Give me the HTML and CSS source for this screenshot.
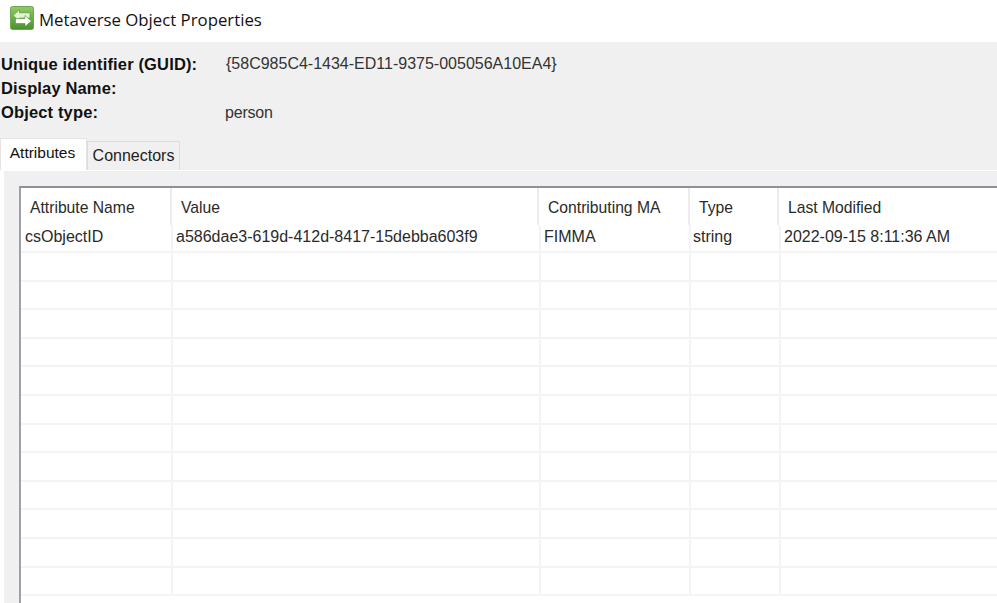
FILE: index.html
```html
<!DOCTYPE html>
<html lang="en">
<head>
<meta charset="utf-8">
<title>Metaverse Object Properties</title>
<link rel="stylesheet" href="styles.css">
</head>
<body>
<div class="window">
  <header class="titlebar">
    <svg class="app-icon" viewBox="0 0 24 24" width="24" height="24" aria-hidden="true">
      <defs>
        <linearGradient id="g" x1="0" y1="0" x2="0" y2="1">
          <stop offset="0" stop-color="#93c96a"/>
          <stop offset="1" stop-color="#47922a"/>
        </linearGradient>
      </defs>
      <rect x="0.5" y="0.5" width="23" height="23" rx="2" fill="url(#g)" stroke="#6ea64c"/>
      <path d="M3 9.5 L9.5 3.8 V6.8 H20 V12 H9.5 V15 Z" fill="#e2f3d2" stroke="#4f8f33" stroke-width="0.6"/>
      <path d="M21.5 15 L15 9.5 V12.5 H5.5 V17.5 H15 V20.5 Z" fill="#ffffff" stroke="#4f8f33" stroke-width="0.6"/>
    </svg>
    <h1 class="title">Metaverse Object Properties</h1>
  </header>
  <section class="summary">
    <div class="field"><span class="label">Unique identifier (GUID):</span><span class="val">{58C985C4-1434-ED11-9375-005056A10EA4}</span></div>
    <div class="field"><span class="label">Display Name:</span></div>
    <div class="field"><span class="label">Object type:</span><span class="val">person</span></div>
  </section>
  <nav class="tabs">
    <div class="tab active">Attributes</div>
    <div class="tab">Connectors</div>
  </nav>
  <section class="panel">
    <div class="list">
      <div class="row head">
        <div class="cell c1">Attribute Name</div>
        <div class="cell c2">Value</div>
        <div class="cell c3">Contributing MA</div>
        <div class="cell c4">Type</div>
        <div class="cell c5">Last Modified</div>
      </div>
      <div class="row first">
        <div class="cell c1">csObjectID</div>
        <div class="cell c2">a586dae3-619d-412d-8417-15debba603f9</div>
        <div class="cell c3">FIMMA</div>
        <div class="cell c4">string</div>
        <div class="cell c5">2022-09-15 8:11:36 AM</div>
      </div>
      <div class="row"><div class="cell c1"></div><div class="cell c2"></div><div class="cell c3"></div><div class="cell c4"></div><div class="cell c5"></div></div>
      <div class="row"><div class="cell c1"></div><div class="cell c2"></div><div class="cell c3"></div><div class="cell c4"></div><div class="cell c5"></div></div>
      <div class="row"><div class="cell c1"></div><div class="cell c2"></div><div class="cell c3"></div><div class="cell c4"></div><div class="cell c5"></div></div>
      <div class="row"><div class="cell c1"></div><div class="cell c2"></div><div class="cell c3"></div><div class="cell c4"></div><div class="cell c5"></div></div>
      <div class="row"><div class="cell c1"></div><div class="cell c2"></div><div class="cell c3"></div><div class="cell c4"></div><div class="cell c5"></div></div>
      <div class="row"><div class="cell c1"></div><div class="cell c2"></div><div class="cell c3"></div><div class="cell c4"></div><div class="cell c5"></div></div>
      <div class="row"><div class="cell c1"></div><div class="cell c2"></div><div class="cell c3"></div><div class="cell c4"></div><div class="cell c5"></div></div>
      <div class="row"><div class="cell c1"></div><div class="cell c2"></div><div class="cell c3"></div><div class="cell c4"></div><div class="cell c5"></div></div>
      <div class="row"><div class="cell c1"></div><div class="cell c2"></div><div class="cell c3"></div><div class="cell c4"></div><div class="cell c5"></div></div>
      <div class="row"><div class="cell c1"></div><div class="cell c2"></div><div class="cell c3"></div><div class="cell c4"></div><div class="cell c5"></div></div>
      <div class="row"><div class="cell c1"></div><div class="cell c2"></div><div class="cell c3"></div><div class="cell c4"></div><div class="cell c5"></div></div>
      <div class="row"><div class="cell c1"></div><div class="cell c2"></div><div class="cell c3"></div><div class="cell c4"></div><div class="cell c5"></div></div>
    </div>
  </section>
</div>
</body>
</html>
```
FILE: styles.css
```css
html, body {
  margin: 0;
  padding: 0;
  height: 100%;
  overflow: hidden;
  background: #fff;
}
.window {
  width: 997px;
  height: 603px;
  display: flex;
  flex-direction: column;
  overflow: hidden;
  font-family: "Liberation Sans", Arial, sans-serif;
  color: #1c1c1c;
  background: #f0f0f0;
}
.titlebar {
  height: 42px;
  flex: none;
  display: flex;
  align-items: center;
  gap: 5px;
  padding: 0 0 6px 10px;
  box-sizing: border-box;
  background: #fff;
}
.app-icon { flex: none; }
.title {
  margin: 2px 0 0;
  font-size: 16.8px;
  font-weight: 400;
  color: #111;
  font-family: "Open Sans", "Liberation Sans", sans-serif;
}
.summary {
  flex: none;
  height: 96px;
  padding: 10px 0 0 1px;
  box-sizing: border-box;
}
.field {
  display: flex;
  height: 24px;
  align-items: center;
  font-size: 16px;
}
.label {
  width: 225px;
  flex: none;
  font-size: 16.5px;
  font-weight: 700;
  color: #111;
  letter-spacing: 0.15px;
}
.val {
  font-size: 16px;
  color: #333;
}
.field:last-child .val {
  margin-top: 2px;
  margin-left: -1px;
  letter-spacing: -0.2px;
}
.tabs {
  flex: none;
  height: 32px;
  display: flex;
  align-items: flex-end;
  font-size: 16px;
}
.tab {
  height: 29px;
  width: 93px;
  box-sizing: border-box;
  padding-top: 5px;
  text-align: center;
  background: #f0f0f0;
  border: 1px solid #dcdcdc;
  border-bottom: none;
  color: #222;
}
.tab.active {
  width: 87px;
  height: 32px;
  background: #fff;
  border-color: #e4e4e4;
  padding: 5px 2px 0 0;
  font-size: 15.5px;
  color: #111;
}
.panel {
  flex: 1;
  min-height: 0;
  display: flex;
  box-sizing: border-box;
  padding: 15px 0 0 15px;
  border-left: 4px solid #fff;
  border-top: 1px solid #fff;
}
.list {
  flex: 1;
  min-width: 0;
  background: #fff;
  border-top: 2px solid #8f8f99;
  border-left: 2px solid #9f9fa8;
  font-size: 16px;
}
.row {
  display: grid;
  grid-template-columns: 152px 368px 150px 90px 1fr;
  height: 28.6px;
  box-sizing: border-box;
}
.cell {
  border-right: 2px solid #f4f4f4;
  border-bottom: 2px solid #f4f4f4;
  box-sizing: border-box;
  padding: 0 0 0 3px;
  white-space: nowrap;
  display: flex;
  align-items: center;
  color: #2a2a2a;
}
.cell.c1 { padding-left: 4px; }
.cell.c4 { padding-left: 2px; }
.cell.c5 { border-right: none; }
.row.head {
  grid-template-columns: 151px 367px 151px 89px 1fr;
  height: 37px;
  font-size: 15.7px;
}
.row.head .cell {
  border-bottom: none;
  padding: 2px 0 0 9px;
  border-right-color: #ececec;
}
.row.first {
  height: 28px;
}
.row.first .cell {
  padding-bottom: 3px;
}
```
